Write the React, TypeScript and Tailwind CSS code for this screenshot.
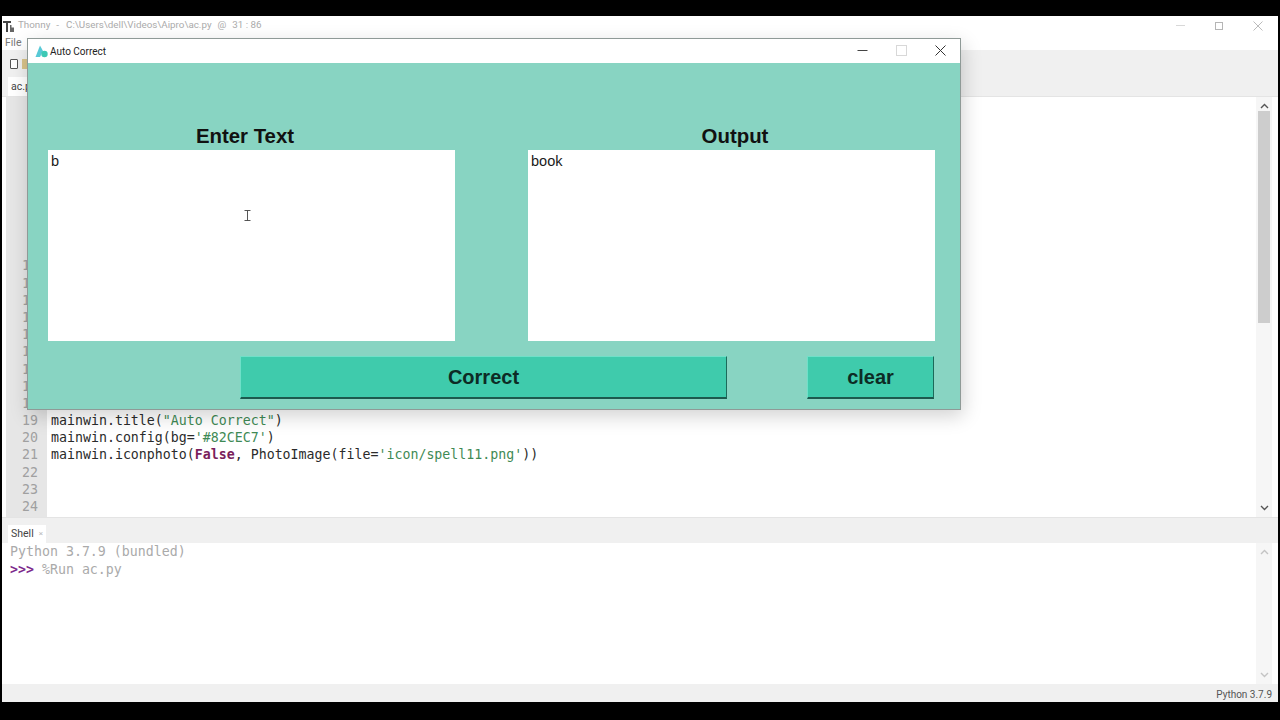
import React from "react";

const sans = "font-['Roboto','Open_Sans',sans-serif]";
const mono = "font-['DejaVu_Sans_Mono','Liberation_Mono',monospace]";

function Code() {
  const lines: React.ReactNode[] = [];
  for (let i = 1; i <= 18; i++) lines.push(<div key={i} className="h-[17.2px]" />);
  return (
    <div className={`flex-1 pl-[4px] pt-[5.7px] text-[13.27px] leading-[17.2px] text-[#2b2b2b] whitespace-pre ${mono}`}>
      {lines}
      <div className="h-[17.2px]">
        mainwin.title(<span className="text-[#3f8a55]">"Auto Correct"</span>)
      </div>
      <div className="h-[17.2px]">
        mainwin.config(bg=<span className="text-[#3f8a55]">'#82CEC7'</span>)
      </div>
      <div className="h-[17.2px]">
        mainwin.iconphoto(<span className="font-bold text-[#7a1f5c]">False</span>, PhotoImage(file=
        <span className="text-[#3f8a55]">'icon/spell11.png'</span>))
      </div>
    </div>
  );
}

function Scrollbar({ thumb, faint }: { thumb: boolean; faint?: boolean }) {
  const c = faint ? "#c4c4c4" : "#555";
  return (
    <div className="flex w-[16px] flex-col items-center bg-[#f6f6f6] py-[6px]">
      <svg width="9" height="6" viewBox="0 0 9 6" fill="none" stroke={c} strokeWidth="1.4">
        <path d="M1 5l3.5-3.5L8 5" />
      </svg>
      {thumb ? <div className="mt-[2px] h-[212px] w-[12px] bg-[#cdcdcd]" /> : null}
      <div className="flex-1" />
      <svg width="9" height="6" viewBox="0 0 9 6" fill="none" stroke={c} strokeWidth="1.4">
        <path d="M1 1l3.5 3.5L8 1" />
      </svg>
    </div>
  );
}

function Dialog() {
  return (
    <div className="absolute left-[27px] top-[38px] flex h-[372px] w-[934px] flex-col border border-[#8f9a97] shadow-[2px_6px_18px_rgba(0,0,0,0.18)]">
      <div className={`flex h-[24px] items-center bg-white ${sans}`}>
        <svg width="14" height="14" viewBox="0 0 14 14" className="ml-[7px]">
          <path d="M0.5 13L5 1.5l3 5.5-3 6z" fill="#58c9d6" />
          <circle cx="9.5" cy="10" r="3.2" fill="#3cc9b5" />
        </svg>
        <span className="ml-[1px] text-[10px] text-[#222]">Auto Correct</span>
        <div className="flex-1" />
        <svg width="11" height="11" viewBox="0 0 11 11" className="mb-[2px] mr-[28px]" stroke="#444" fill="none">
          <path d="M0.5 5.5h10" />
        </svg>
        <svg width="11" height="11" viewBox="0 0 11 11" className="mb-[2px] mr-[28px]" stroke="#d8d8d8" fill="none">
          <rect x="0.5" y="0.5" width="10" height="10" />
        </svg>
        <svg width="11" height="11" viewBox="0 0 11 11" className="mb-[2px] mr-[14px]" stroke="#333" fill="none">
          <path d="M0.5 0.5l10 10M10.5 0.5l-10 10" />
        </svg>
      </div>
      <div className="relative flex flex-1 flex-col bg-[#88d4c2]">
        <div className="flex pt-[61px] font-['Liberation_Sans',sans-serif] text-[20.4px] font-bold leading-[24px] text-[#111]">
          <div className="w-[434px] pr-[20px] pl-[20px] text-center">Enter Text</div>
          <div className="w-[498px] pl-[48px] text-center">Output</div>
        </div>
        <div className="mt-[2px] flex pl-[20px] font-['Liberation_Sans',sans-serif] text-[14.5px] leading-[20px] text-[#1a1a1a]">
          <div className="h-[191px] w-[407px] bg-white px-[3px] pt-[1px]">b</div>
          <div className="ml-[73px] h-[191px] w-[407px] bg-white px-[3px] pt-[1px]">book</div>
        </div>
        <div className="mt-[15px] flex pl-[212px] font-['Liberation_Sans',sans-serif] text-[20px] font-bold text-[#0d2b25]">
          <div className="flex h-[43px] w-[487px] items-center justify-center border border-t-[#6fe0c8] border-l-[#6fe0c8] border-r-[#1c6a5a] border-b-2 border-b-[#1c5a4e] bg-[#3fcbac]">
            Correct
          </div>
          <div className="ml-[80px] flex h-[43px] w-[127px] items-center justify-center border border-t-[#6fe0c8] border-l-[#6fe0c8] border-r-[#1c6a5a] border-b-2 border-b-[#1c5a4e] bg-[#3fcbac]">
            clear
          </div>
        </div>
        <svg width="7" height="11" viewBox="0 0 7 11" className="absolute left-[216px] top-[147px]" stroke="#444" fill="none" strokeWidth="0.9">
          <path d="M0.5 0.5h6M0.5 10.5h6M3.5 0.5v10" />
        </svg>
      </div>
    </div>
  );
}

export default function App() {
  return (
    <div className="relative flex h-[720px] w-[1280px] flex-col overflow-hidden bg-black pb-[18px] pl-[2px] pr-[2px] pt-[16px]">
      <div className="flex flex-1 flex-col bg-white">
        <div className={`flex h-[19px] items-center text-[9.8px] text-[#ababab] ${sans}`}>
          <svg width="12" height="14" viewBox="0 0 12 14" className="ml-[1px]">
            <path d="M0 2h8v2H5v9H3V4H0z" fill="#444" />
            <path d="M7 6h1.5v2.5H11V13H7z" fill="#666" />
          </svg>
          <span className="ml-[3px]">Thonny</span>
          <span className="ml-[6px]">-</span>
          <span className="ml-[7px]">C:\Users\dell\Videos\Aipro\ac.py</span>
          <span className="ml-[6px]">@</span>
          <span className="ml-[6px]">31 : 86</span>
          <div className="flex-1" />
          <div className="mr-[30px] h-px w-[9px] bg-[#d8d8d8]" />
          <div className="mr-[30px] h-[8px] w-[8px] border border-[#b5b5b5]" />
          <svg width="10" height="10" viewBox="0 0 10 10" className="mr-[15px]" stroke="#bbb" fill="none">
            <path d="M0.5 0.5l9 9M9.5 0.5l-9 9" />
          </svg>
        </div>
        <div className={`flex h-[15px] items-center pl-[3px] text-[10.5px] text-[#777] ${sans}`}>File</div>
        <div className="flex h-[27px] items-center gap-[4px] bg-[#f0f0f0] pl-[8px]">
          <div className="h-[10px] w-[8px] rounded-[1px] border border-[#555] bg-white" />
          <div className="h-[10px] w-[9px] bg-[#d9c48a]" />
        </div>
        <div className="flex h-[19px] bg-[#f0f0f0] pl-[6px]">
          <div className={`w-[60px] bg-white pl-[3px] text-[10.5px] leading-[19px] text-[#444] ${sans}`}>ac.py</div>
        </div>
        <div className="relative flex flex-1 flex-col bg-[#f0f0f0]">
          <div className="flex h-[422px] border-y border-[#e4e4e4] bg-white pl-[4px]">
            <div className={`w-[41px] bg-[#e6e6e6] pt-[5.7px] pr-[9px] text-right text-[13.27px] leading-[17.2px] text-[#a0a0a0] ${mono}`}>
              {Array.from({ length: 24 }, (_, i) => (
                <div key={i} className="h-[17.2px]">
                  {i + 1}
                </div>
              ))}
            </div>
            <Code />
            <Scrollbar thumb />
            <div className="w-[6px] bg-white" />
          </div>
          <div className="flex h-[25px] items-end bg-[#f0f0f0] pl-[6px]">
            <div className={`flex h-[18px] w-[38px] items-center bg-white pl-[3px] text-[10.5px] text-[#444] ${sans}`}>
              Shell <span className="ml-[5px] text-[8px] text-[#bbb]">×</span>
            </div>
          </div>
          <div className="flex h-[141px] bg-white pl-[6px]">
            <div className={`flex-1 pl-[2px] text-[13.27px] leading-[17.5px] text-[#aaa] ${mono}`}>
              <div>Python 3.7.9 (bundled)</div>
              <div>
                <span className="font-bold text-[#7d2a8c]">&gt;&gt;&gt;</span> %Run ac.py
              </div>
            </div>
            <Scrollbar thumb={false} faint />
            <div className="w-[6px] bg-white" />
          </div>
          <div className={`flex flex-1 items-center justify-end bg-[#f0f0f0] pr-[6px] pt-[3px] text-[10px] text-[#555] ${sans}`}>
            Python 3.7.9
          </div>
        </div>
      </div>
      <Dialog />
    </div>
  );
}
